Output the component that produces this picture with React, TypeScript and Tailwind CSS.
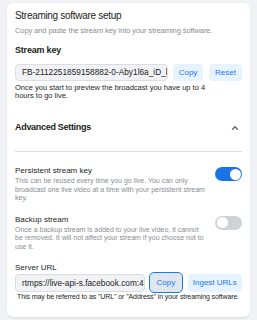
export default function App() {
  return (
    <div className="min-h-screen w-full bg-[#f0f2f5] px-[7px] pt-[3px] font-['Liberation_Sans',Arial,sans-serif]">
      <div className="rounded-[6px] bg-white px-[8px] pt-[6px] pb-[16px] shadow-[0_1px_2px_rgba(0,0,0,0.1)]">
        <div className="text-[10px] leading-[13px] font-medium tracking-[-0.3px] text-[#1c1e21]">Streaming software setup</div>
        <div className="mt-[3px] text-[7.5px] leading-[11px] tracking-[-0.08px] whitespace-nowrap text-[#8a8d91]">
          Copy and paste the stream key into your streaming software.
        </div>
        <div className="mt-[8px] text-[9px] leading-[13px] font-semibold tracking-[-0.2px] text-[#1c1e21]">Stream key</div>

        <div className="mt-[7px] flex items-center gap-[5px]">
          <div className="h-[17px] w-[153px] shrink-0 overflow-hidden rounded-[4px] border border-[#dadde1] bg-[#f0f2f5] px-[6px] text-[8.3px] leading-[15px] whitespace-nowrap text-clip text-[#1c1e21]">
            FB-2112251859158882-0-Aby1l6a_iD_k3eZ
          </div>
          <button className="h-[17px] w-[30px] rounded-[4px] bg-[#e7f3ff] text-[8px] font-medium text-[#1877f2]">Copy</button>
          <button className="ml-[1px] h-[17px] w-[33px] rounded-[4px] bg-[#e7f3ff] text-[8px] font-medium text-[#1877f2]">Reset</button>
        </div>
        <div className="mt-[3px] w-[200px] text-[7.5px] leading-[8px] text-[#1c1e21]">
          Once you start to preview the broadcast you have up to 4<br />
          hours to go live.
        </div>

        <div className="mt-[21px] flex items-center justify-between">
          <div className="text-[9px] leading-[13px] font-semibold tracking-[-0.3px] text-[#1c1e21]">Advanced Settings</div>
          <svg width="10" height="10" viewBox="0 0 10 10" className="mr-[2px]">
            <path d="M2.5 6.3 L5 3.8 L7.5 6.3" fill="none" stroke="#606770" strokeWidth="1.4" strokeLinecap="round" strokeLinejoin="round" />
          </svg>
        </div>
        <div className="mt-[17px] h-px bg-[#dadde1]" />

        <div className="mt-[13px] flex items-start justify-between">
          <div className="w-[192px]">
            <div className="text-[8px] leading-[11px] text-[#1c1e21]">Persistent stream key</div>
            <div className="mt-[1px] text-[7px] leading-[8.5px] text-[#8a8d91]">
              This can be reused every time you go live. You can only broadcast one live video at a time with your persistent stream key.
            </div>
          </div>
          <div className="mt-[2px] flex h-[14px] w-[27px] items-center justify-end rounded-full bg-[#1b74e4] px-[1.5px]">
            <div className="h-[11px] w-[11px] rounded-full bg-white" />
          </div>
        </div>

        <div className="mt-[11px] flex items-start justify-between">
          <div className="w-[192px]">
            <div className="text-[8px] leading-[11px] text-[#1c1e21]">Backup stream</div>
            <div className="mt-[1px] text-[7px] leading-[8.5px] text-[#8a8d91]">
              Once a backup stream is added to your live video, it cannot be removed. It will not affect your stream if you choose not to use it.
            </div>
          </div>
          <div className="mt-[2px] flex h-[14px] w-[27px] items-center justify-start rounded-full bg-[#cfd2d6] px-[1.5px]">
            <div className="h-[11px] w-[11px] rounded-full bg-white" />
          </div>
        </div>

        <div className="mt-[11px] text-[8px] leading-[11px] text-[#1c1e21]">Server URL</div>
        <div className="-mt-[1px] flex items-center gap-[4px]">
          <div className="h-[18px] w-[130px] shrink-0 overflow-hidden rounded-[4px] border border-[#dadde1] bg-[#f0f2f5] px-[6px] text-[8.3px] leading-[16px] whitespace-nowrap text-clip text-[#1c1e21]">
            rtmps://live-api-s.facebook.com:443/rtmp/
          </div>
          <button className="h-[21px] w-[34px] rounded-[5px] border-[1.5px] border-[#1877f2] bg-[#dfe6ee] text-[8px] font-medium text-[#1877f2]">Copy</button>
          <button className="ml-[1px] h-[18px] w-[55px] rounded-[4px] bg-[#e7f3ff] text-[8px] font-medium text-[#1877f2]">Ingest URLs</button>
        </div>
        <div className="pl-[2px] text-[7px] leading-[8px] tracking-[-0.1px] whitespace-nowrap text-[#1c1e21]">
          This may be referred to as "URL" or "Address" in your streaming software.
        </div>
      </div>
    </div>
  );
}
